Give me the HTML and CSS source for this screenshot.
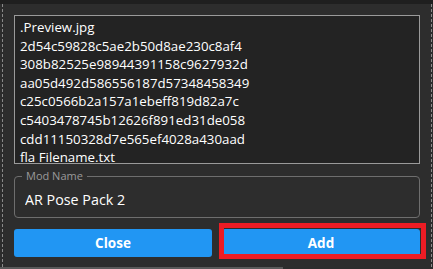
FILE: index.html
```html
<!DOCTYPE html>
<html lang="en">
<head>
    <meta charset="UTF-8">
    <title>Add Mod</title>
    <link rel="stylesheet" href="styles.css">
</head>
<body>
    <div class="topbar"></div>
    <div class="panel">
        <div class="files">
            <div>.Preview.jpg</div>
            <div>2d54c59828c5ae2b50d8ae230c8af4</div>
            <div>308b82525e98944391158c9627932d</div>
            <div>aa05d492d586556187d57348458349</div>
            <div>c25c0566b2a157a1ebeff819d82a7c</div>
            <div>c5403478745b12626f891ed31de058</div>
            <div>cdd11150328d7e565ef4028a430aad</div>
            <div>fla Filename.txt</div>
        </div>

        <div class="field">
            <span class="field-label">Mod Name</span>
            <input class="field-input" type="text" value="AR Pose Pack 2">
        </div>

        <div class="buttons">
            <button class="btn">Close</button>
            <div class="highlight">
                <button class="btn">Add</button>
            </div>
        </div>
    </div>
    <div class="scrollbar"></div>
</body>
</html>
```

FILE: styles.css
```css
body {
    margin: 0;
    width: 433px;
    height: 269px;
    overflow: hidden;
    background-color: #2d2d2d;
    font-family: "Open Sans", "Noto Sans", sans-serif;
    color: #fff;
    position: relative;
}

.topbar {
    height: 4px;
    background-color: #1f1f1f;
}

.panel {
    margin: 0 1px 0 2px;
    height: 263px;
    border-left: 1px dashed #8a8a8a;
    border-right: 1px dashed #8a8a8a;
    padding: 11px 11px 0 11px;
    box-sizing: border-box;
    display: flex;
    flex-direction: column;
}

.files {
    height: 149px;
    box-sizing: border-box;
    border: 1px solid #9a9a9a;
    background-color: #232323;
    padding: 2px 5px;
    font-size: 13.3px;
    line-height: 18.6px;
    overflow: hidden;
    white-space: nowrap;
}

.field {
    position: relative;
    margin-top: 12px;
    height: 42px;
    box-sizing: border-box;
    border: 1px solid #6e6e6e;
    border-radius: 4px;
}

.field-label {
    position: absolute;
    top: -8px;
    left: 7px;
    padding: 0 4px;
    background-color: #2d2d2d;
    color: #9a9a9a;
    font-size: 11px;
    line-height: 14px;
}

.field-input {
    width: 100%;
    height: 100%;
    box-sizing: border-box;
    background: transparent;
    border: none;
    outline: none;
    color: #fff;
    font-family: inherit;
    font-size: 14.3px;
    padding: 4px 10px 0 10px;
}

.buttons {
    margin-top: 11px;
    display: flex;
    gap: 10px;
}

.btn {
    width: 198px;
    height: 28px;
    padding: 0;
    border: none;
    border-radius: 3px;
    background-color: #2196f3;
    color: #fff;
    font-family: inherit;
    font-size: 13.5px;
    font-weight: bold;
    cursor: pointer;
}

.highlight {
    position: relative;
    display: flex;
}

.highlight::after {
    content: "";
    position: absolute;
    top: -6px;
    left: -3px;
    right: -6px;
    bottom: -2px;
    border: 5px solid #ed1c24;
}

.scrollbar {
    position: absolute;
    left: 0;
    bottom: 0;
    width: 283px;
    height: 2px;
    background-color: #5a5a5a;
}
```
